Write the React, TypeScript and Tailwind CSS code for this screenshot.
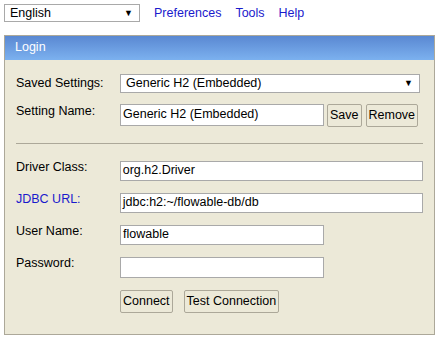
import React from "react";

const font = { fontFamily: '"Liberation Sans", Arial, sans-serif' };

function FakeSelect({ value, className }: { value: string; className: string }) {
  return (
    <div className={`flex items-center justify-between border border-[#a9a9a9] bg-white pl-[5px] pr-[6px] text-[12.5px] text-black ${className}`}>
      <span>{value}</span>
      <span className="text-[9px] leading-none">▼</span>
    </div>
  );
}

function Field({ value = "", className }: { value?: string; className: string }) {
  return (
    <div className={`flex items-center border border-[#a9a9a9] bg-white px-[2px] text-[12.5px] text-black ${className}`}>
      {value}
    </div>
  );
}

function Btn({ children }: { children: React.ReactNode }) {
  return (
    <div className="flex h-[23px] items-center rounded-[2px] border border-[#aca899] bg-[#ece9d8] px-[2px] text-[12.5px] text-black">
      {children}
    </div>
  );
}

export default function App() {
  return (
    <div className="h-[339px] w-[442px] bg-white text-[12.5px]" style={font}>
      {/* top bar */}
      <div className="flex items-center pl-[4px] pt-[4px]">
        <FakeSelect value="English" className="h-[18px] w-[136px]" />
        <div className="ml-[14px] flex gap-[14px] text-[#1a1acc]">
          <span>Preferences</span>
          <span>Tools</span>
          <span>Help</span>
        </div>
      </div>

      {/* login panel */}
      <div className="ml-[4px] mt-[12px] h-[300px] w-[431px] border border-[#aca899] bg-[#ece9d8]">
        <div className="flex h-[24px] items-center bg-gradient-to-b from-[#5a88d2] to-[#7cb1ef] pl-[10px] text-white">
          Login
        </div>

        <div className="pl-[11px] pr-[11px] pt-[14px] leading-[15px] text-black">
          <div className="flex items-center">
            <div className="w-[104px]">Saved Settings:</div>
            <FakeSelect value="Generic H2 (Embedded)" className="h-[19px] w-[300px]" />
          </div>

          <div className="mt-[11px] flex items-start">
            <div className="w-[104px]">Setting Name:</div>
            <Field value="Generic H2 (Embedded)" className="h-[22px] w-[204px]" />
            <div className="ml-[3px] flex gap-[4px]">
              <Btn>Save</Btn>
              <Btn>Remove</Btn>
            </div>
          </div>

          <div className="mt-[16px] h-px w-[407px] bg-[#aca899]" />

          <div className="mt-[17px] flex flex-col gap-[12px]">
            <div className="flex items-start">
              <div className="-mt-px w-[104px]">Driver Class:</div>
              <Field value="org.h2.Driver" className="h-[20px] w-[304px]" />
            </div>
            <div className="flex items-start">
              <div className="-mt-px w-[104px] text-[#1a1acc]">JDBC URL:</div>
              <Field value="jdbc:h2:~/flowable-db/db" className="h-[20px] w-[304px]" />
            </div>
            <div className="flex items-start">
              <div className="-mt-px w-[104px]">User Name:</div>
              <Field value="flowable" className="h-[20px] w-[204px]" />
            </div>
            <div className="flex items-start">
              <div className="-mt-px w-[104px]">Password:</div>
              <Field className="h-[21px] w-[204px]" />
            </div>
            <div className="flex items-start">
              <div className="w-[104px]" />
              <div className="flex gap-[11px]">
                <Btn>Connect</Btn>
                <Btn>Test Connection</Btn>
              </div>
            </div>
          </div>
        </div>
      </div>
    </div>
  );
}
